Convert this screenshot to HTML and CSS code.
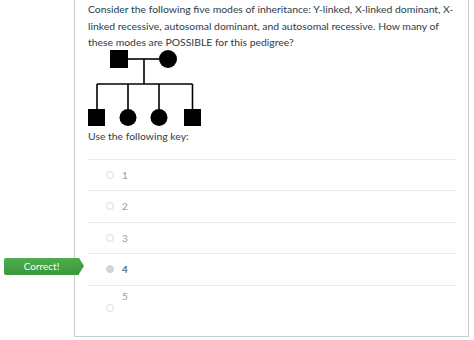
FILE: index.html
```html
<!DOCTYPE html>
<html>
<head>
<meta charset="utf-8">
<link rel="stylesheet" href="styles.css">
</head>
<body>
<div class="card">
  <p class="question">Consider the following five modes of inheritance: Y-linked, X-linked dominant, X-linked recessive, autosomal dominant, and autosomal recessive. How many of these modes are POSSIBLE for this pedigree?</p>
  <svg class="pedigree" width="116" height="80" viewBox="0 0 116 80">
    <g stroke="#000" stroke-width="1.6" fill="none">
      <line x1="40" y1="10" x2="71" y2="10"/>
      <line x1="56" y1="10" x2="56" y2="35"/>
      <line x1="9" y1="35" x2="104.5" y2="35"/>
      <line x1="9" y1="35" x2="9" y2="60"/>
      <line x1="40" y1="35" x2="40" y2="60"/>
      <line x1="71" y1="35" x2="71" y2="60"/>
      <line x1="104.5" y1="35" x2="104.5" y2="60"/>
    </g>
    <g fill="#000">
      <rect x="22" y="1" width="18" height="18"/>
      <circle cx="80" cy="10" r="9"/>
      <rect x="0" y="60" width="17" height="17"/>
      <circle cx="40" cy="68.5" r="8.5"/>
      <circle cx="71" cy="68.5" r="8.5"/>
      <rect x="96" y="60" width="17" height="17"/>
    </g>
  </svg>
  <p class="key">Use the following key:</p>
  <div class="options">
    <div class="opt"><span class="radio"></span><span class="label">1</span></div>
    <div class="opt"><span class="radio"></span><span class="label">2</span></div>
    <div class="opt"><span class="radio"></span><span class="label">3</span></div>
    <div class="opt selected"><span class="badge">Correct!</span><span class="radio"></span><span class="label">4</span></div>
    <div class="opt wrapped"><span class="radio"></span><span class="label">5</span></div>
  </div>
</div>
</body>
</html>
```

FILE: styles.css
```css
html, body {
  margin: 0;
  padding: 0;
  background: #fff;
}
body {
  font-family: Lato, "Liberation Sans", sans-serif;
  color: #2d3b45;
}
.card {
  margin-left: 74px;
  width: 395px;
  height: 337px;
  box-sizing: border-box;
  border: 1px solid #c7cdd1;
  border-top: none;
  padding: 1px 11px 0 13px;
}
.question {
  margin: 0;
  font-size: 10.4px;
  line-height: 16.5px;
}
.pedigree {
  display: block;
  margin-top: -2px;
}
.key {
  margin: -1px 0 0 0;
  font-size: 10.4px;
  line-height: 17px;
}
.options {
  margin-top: 14px;
  margin-left: -1px;
}
.opt {
  position: relative;
  display: flex;
  align-items: center;
  border-top: 1px solid #e8eaec;
  padding: 8px 0;
  height: 14.5px;
  line-height: 14.5px;
}
.radio {
  width: 6px;
  height: 6px;
  border: 1px solid #dcdcdc;
  border-radius: 50%;
  margin-left: 19px;
  background: #fff;
}
.label {
  margin-left: 8px;
  font-size: 10px;
  color: #9a9a9a;
}
.selected .radio {
  background: #d6d6d6;
  border-color: #cfcfcf;
}
.selected .label {
  color: #333;
}
.wrapped {
  flex-direction: column-reverse;
  align-items: flex-start;
  height: auto;
  padding-top: 3px;
}
.wrapped .label {
  margin-left: 35px;
}
.wrapped .radio {
  margin-top: 1px;
}
.badge {
  position: absolute;
  left: -83px;
  top: 4px;
  width: 75px;
  height: 17px;
  line-height: 17px;
  background: linear-gradient(#4cae4c, #3c963c);
  color: #fff;
  font-size: 10px;
  text-align: center;
  border-radius: 2px 0 0 2px;
}
.badge::after {
  content: "";
  position: absolute;
  right: -5px;
  top: 0;
  border-style: solid;
  border-width: 8.5px 0 8.5px 5px;
  border-color: transparent transparent transparent #449f44;
}
```
